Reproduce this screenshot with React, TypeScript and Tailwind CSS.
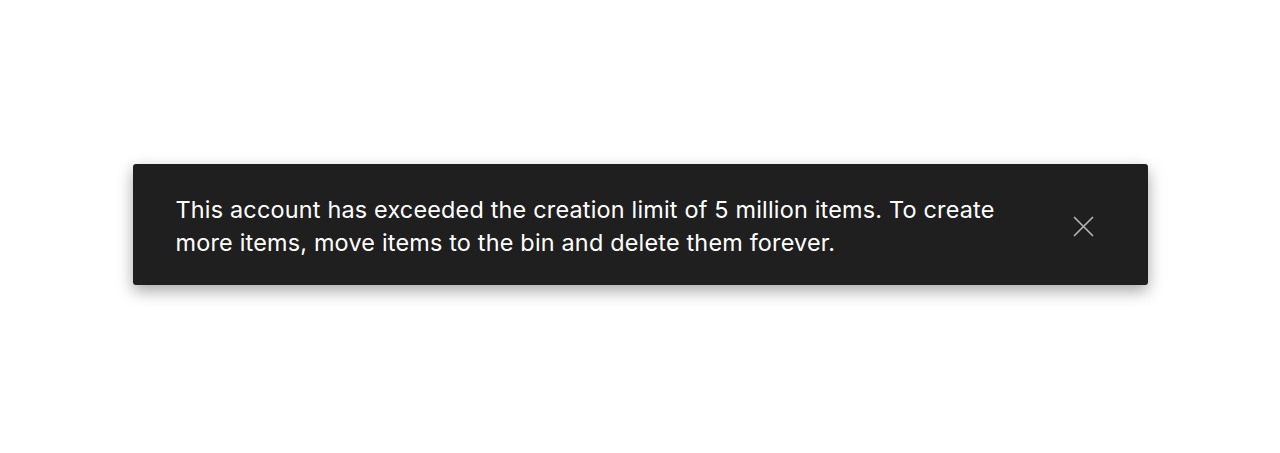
export default function App() {
  return (
    <div className="w-[1280px] h-[453px] bg-white flex justify-center pt-[164px]">
      <div className="w-[1015px] h-[121px] bg-[#1f1f1f] rounded-[3px] shadow-[0_6px_16px_rgba(0,0,0,0.35)] flex items-center pl-[43px] pr-[54px]">
        <p
          className="w-[860px] text-white text-[23.4px] leading-[33px] tracking-[0.2px] pt-[3px]"
          style={{ fontFamily: 'Inter, "Liberation Sans", Arial, sans-serif' }}
        >
          This account has exceeded the creation limit of 5 million items. To create more items, move items to the bin and delete them forever.
        </p>
        <button className="ml-auto mt-[4px] w-[21px] h-[21px] flex items-center justify-center text-[#b4b4b4]">
          <svg width="21" height="21" viewBox="0 0 21 21" fill="none" stroke="currentColor" strokeWidth="1.7" strokeLinecap="round">
            <path d="M1.5 1.5 L19.5 19.5 M19.5 1.5 L1.5 19.5" />
          </svg>
        </button>
      </div>
    </div>
  );
}
